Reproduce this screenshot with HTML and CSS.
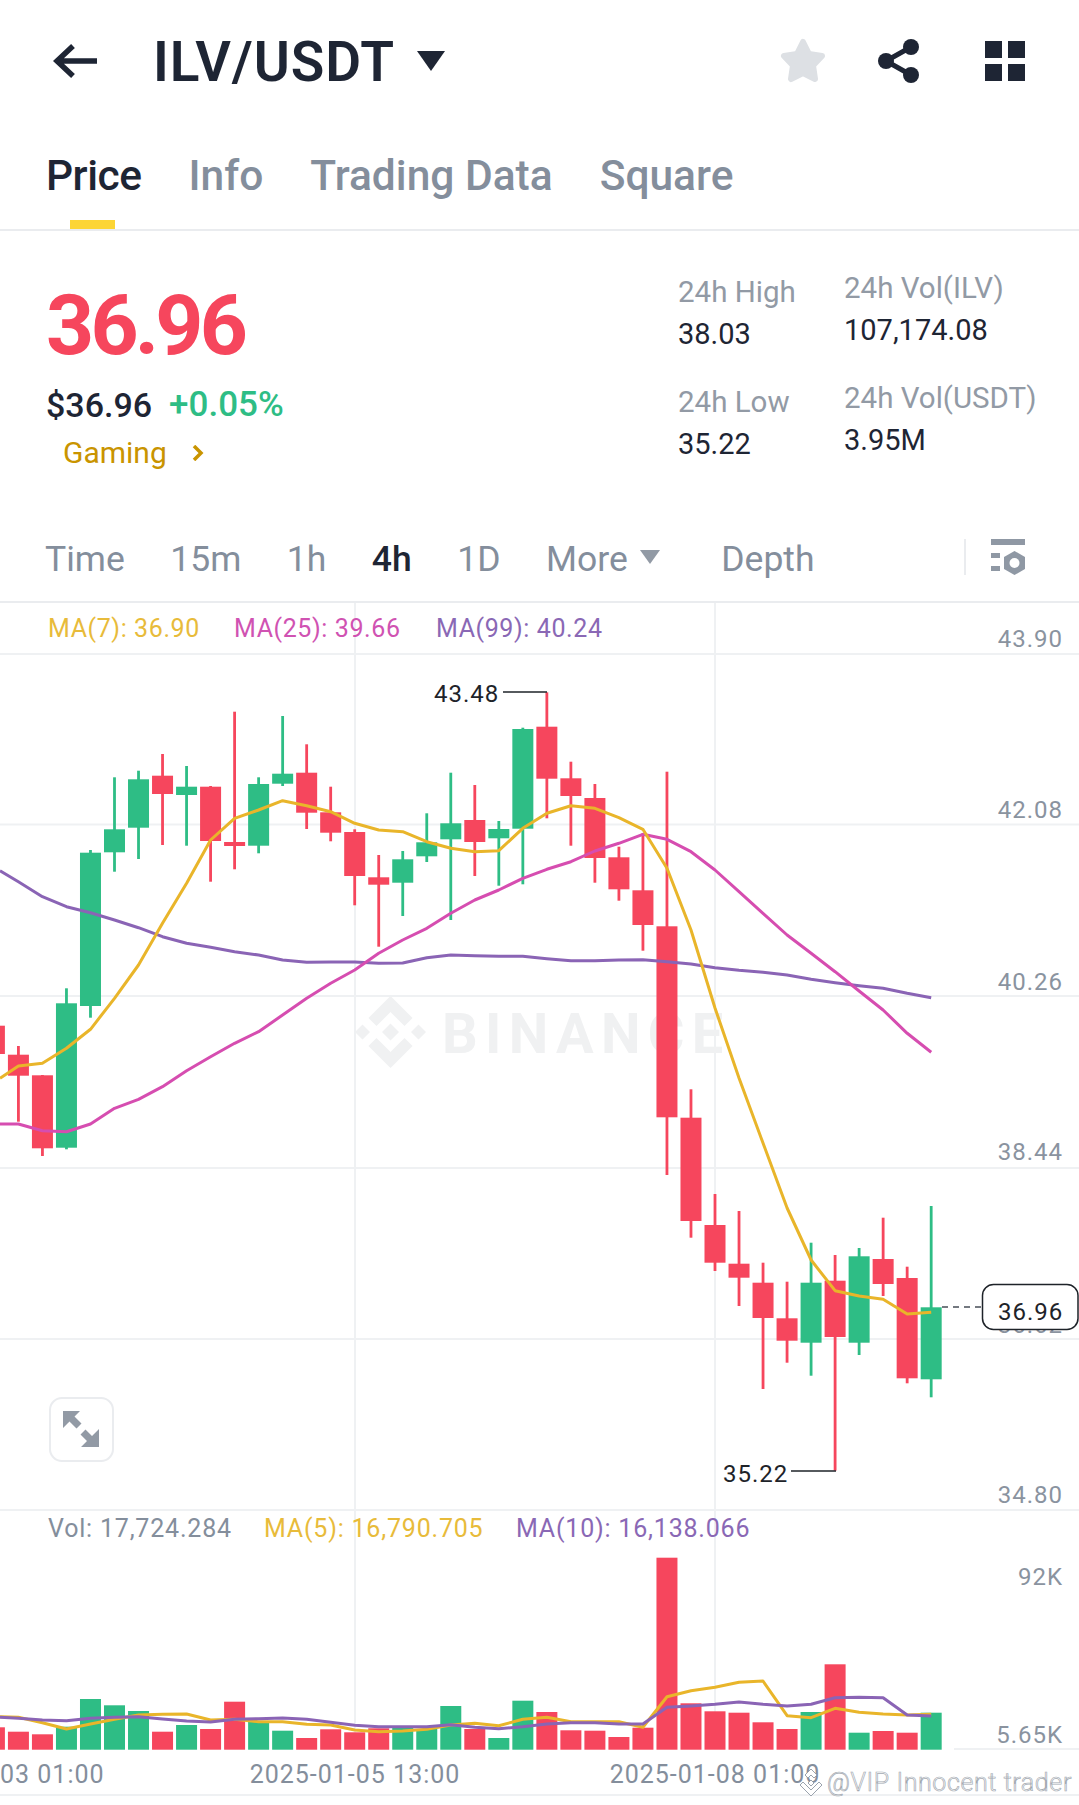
FILE: index.html
```html
<!DOCTYPE html>
<html>
<head>
<meta charset="UTF-8">
<title>ILV/USDT</title>
<link rel="stylesheet" href="styles.css">
</head>
<body>
<div class="wrapper">
	<div class="topbar">
		<svg class="back" width="45" height="36" viewBox="0 0 45 36"><path d="M44 18H5M20 3L4 18l16 15" fill="none" stroke="#1e2534" stroke-width="5.5"/></svg>
		<h1 class="pair">ILV/USDT</h1>
		<span class="caret"></span>
		<svg class="star" width="46" height="46" viewBox="0 0 46 46"><path d="M23 4l6 12 13 2-9 9.500 2 13.500-12-6-12 6 2-13.500L4 18l13-2z" fill="#dde0e4" stroke="#dde0e4" stroke-width="6" stroke-linejoin="round"/></svg>
		<svg class="share" width="44" height="46" viewBox="0 0 44 46"><path d="M33 9L8 23l25 14" fill="none" stroke="#1e2534" stroke-width="5"/><circle cx="33" cy="9" r="8" fill="#1e2534"/><circle cx="8" cy="23" r="8" fill="#1e2534"/><circle cx="33" cy="37" r="8" fill="#1e2534"/></svg>
		<div class="apps"><i></i><i></i><i></i><i></i></div>
	</div>

	<div class="tabs">
		<a class="tab active">Price</a>
		<a class="tab">Info</a>
		<a class="tab">Trading Data</a>
		<a class="tab">Square</a>
	</div>

	<div class="stats">
		<div class="summary">
			<div class="last">36.96</div>
			<div class="fiat"><span>$36.96</span><span class="change">+0.05%</span></div>
			<div class="tag">Gaming
				<svg width="12" height="16" viewBox="0 0 12 16"><path d="M2 1l7 7-7 7" fill="none" stroke="#c99400" stroke-width="3.500"/></svg>
			</div>
		</div>
		<div class="col col-left">
			<div class="label">24h High</div>
			<div class="value">38.03</div>
			<div class="label">24h Low</div>
			<div class="value">35.22</div>
		</div>
		<div class="col col-right">
			<div class="label">24h Vol(ILV)</div>
			<div class="value">107,174.08</div>
			<div class="label">24h Vol(USDT)</div>
			<div class="value">3.95M</div>
		</div>
	</div>

	<div class="intervals">
		<a class="iv iv-time">Time</a>
		<a class="iv">15m</a>
		<a class="iv">1h</a>
		<a class="iv on">4h</a>
		<a class="iv">1D</a>
		<a class="iv iv-more">More<span class="caret-sm"></span></a>
		<a class="iv">Depth</a>
		<div class="iv-tools">
			<svg width="36" height="36" viewBox="0 0 36 36"><path d="M1 0h34v6H1zM1 14h9v5H1zM1 27h9v5H1z" fill="#8f98a4"/><path d="M24.500 12l10.500 6v12l-10.500 6-10.500-6V18z" fill="#8f98a4"/><circle cx="24.500" cy="24" r="5" fill="#fff"/></svg>
		</div>
	</div>

	<svg id="chart" class="chart" width="1079" height="1202" viewBox="0 603 1079 1202">
		<g class="grid">
			<path d="M0 654H1079M0 824.500H1079M0 996H1079M0 1168H1079M0 1339H1079M0 1510H1079M0 1795H1079M954 1749H1079"/>
			<path d="M355 603V1749M715 603V1749"/>
		</g>
		<g class="mark">
			<path d="M390.500 996l22 22-8 8-14-14-14 14-8-8zM390.500 1068l22-22-8-8-14 14-14-14-8 8zM390.500 1023.500l8.500 8.500-8.500 8.500-8.500-8.500zM362.500 1024.500l7.500 7.500-7.500 7.500-7.500-7.500zM418.500 1024.500l7.500 7.500-7.500 7.500-7.500-7.500z"/>
			<text x="442" y="1053">BINANCE</text>
		</g>
		<g id="candles"></g>
		<g id="ma"></g>
		<g id="vols"></g>
		<g id="volma"></g>

		<text class="leg yellow" x="48" y="637">MA(7): 36.90</text>
		<text class="leg magenta" x="234" y="637">MA(25): 39.66</text>
		<text class="leg purple" x="436" y="637">MA(99): 40.24</text>

		<text class="axis" x="1063" y="647">43.90</text>
		<text class="axis" x="1063" y="818">42.08</text>
		<text class="axis" x="1063" y="990">40.26</text>
		<text class="axis" x="1063" y="1160">38.44</text>
		<text class="axis" x="1063" y="1333">36.62</text>
		<text class="axis" x="1063" y="1503">34.80</text>
		<text class="axis" x="1063" y="1585">92K</text>
		<text class="axis" x="1063" y="1743">5.65K</text>

		<text class="peak" x="434" y="702">43.48</text>
		<path class="thin" d="M503 692H547"/>
		<text class="peak" x="723" y="1482">35.22</text>
		<path class="thin" d="M791 1471H836"/>

		<path class="dash" d="M942 1307H983"/>
		<rect class="price-box" x="982.500" y="1284.500" width="95.500" height="45" rx="11"/>
		<text class="peak" x="998" y="1320">36.96</text>

		<rect class="expand" x="50" y="1398" width="63" height="63" rx="12"/>
		<path class="expand-icon" d="M63 1411h17l-5.500 5.500 7 7-5 5-7-7-6.500 6.500zM99 1447H81l6-6-6.500-6.500 5-5 6.500 6.500 7-7z"/>

		<text class="leg vol grey" x="48" y="1537">Vol: 17,724.284</text>
		<text class="leg vol yellow" x="264" y="1537">MA(5): 16,790.705</text>
		<text class="leg vol purple" x="516" y="1537">MA(10): 16,138.066</text>

		<text class="date date-cut" x="0" y="1783">03 01:00</text>
		<text class="date" x="355" y="1783">2025-01-05 13:00</text>
		<text class="date" x="715" y="1783">2025-01-08 01:00</text>

		<path class="wm-logo" d="M811 1769l6 6-3 3-3-3-3 3-3-3zM811 1796l11-11-3-3-8 8-8-8-3 3zM811 1780l3 3-3 3-3-3z"/>
		<text class="wm" x="827" y="1791">@VIP Innocent trader</text>
	</svg>
</div>
<script src="chart.js"></script>
</body>
</html>
```

FILE: styles.css
```css
body{
	margin:0;
	background:#FFF;
	color:#1e2534;
	font-family:Roboto,"Liberation Sans",sans-serif;
}
.wrapper{
	width:1079px;
	height:1805px;
	overflow:hidden;
}
.topbar{
	height:122px;
	display:flex;
	align-items:center;
	padding:0 54px 0 53px;
}
.pair{
	margin:3px 0 0 55px;
	font-size:55px;
	font-weight:600;
	line-height:1;
	letter-spacing:.9px;
}
.caret{
	margin:0 0 0 22px;
	border-top:20px solid #1e2534;
	border-left:14px solid transparent;
	border-right:14px solid transparent;
}
.star{
	margin-left:auto;
}
.share{
	margin-left:52px;
}
.apps{
	margin-left:63px;
	width:40px;
	height:40px;
	display:grid;
	grid-template-columns:1fr 1fr;
	grid-template-rows:1fr 1fr;
	gap:5.500px;
}
.apps i{
	background:#1e2534;
}
.tabs{
	height:107px;
	padding-left:46px;
	display:flex;
	gap:47px;
	border-bottom:2px solid #eaecef;
}
.tab{
	position:relative;
	margin-top:30px;
	font-size:42.500px;
	font-weight:500;
	line-height:47px;
	height:77px;
	color:#848e9c;
}
.tab.active{
	color:#1e2534;
	letter-spacing:-.500px;
}
.tab.active::after{
	content:"";
	position:absolute;
	left:24px;
	bottom:0;
	width:45px;
	height:9px;
	background:#fcd535;
}
.stats{
	height:290px;
	display:flex;
}
.summary{
	width:678px;
	padding:53px 0 0 46px;
	box-sizing:border-box;
}
.last{
	font-size:84px;
	line-height:84px;
	font-weight:700;
	color:#f6465d;
	letter-spacing:-3.800px;
}
.fiat{
	margin-top:17px;
	display:flex;
	gap:17px;
	font-size:34px;
	line-height:40px;
	font-weight:500;
}
.change{
	color:#2ebd85;
	font-size:35px;
}
.tag{
	margin:8px 0 0 17px;
	display:flex;
	align-items:center;
	gap:25px;
	font-size:30px;
	line-height:40px;
	color:#c99400;
}
.col{
	display:flex;
	flex-direction:column;
}
.col-left{
	width:166px;
	padding-top:41px;
}
.col-right{
	padding-top:37px;
}
.label{
	height:40px;
	line-height:40px;
	font-size:29.500px;
	color:#929aa5;
}
.value{
	height:40px;
	line-height:40px;
	margin-top:2px;
	margin-bottom:28px;
	font-size:29px;
	color:#1e2534;
}
.intervals{
	height:80px;
	display:flex;
	padding-left:45px;
	border-bottom:2px solid #eaecef;
}
.iv{
	margin-right:45.500px;
	font-size:35.500px;
	line-height:77px;
	color:#848e9c;
}
.iv.on{
	color:#1e2534;
	font-weight:500;
}
.iv-more{
	margin-right:61.500px;
	display:flex;
	align-items:flex-start;
}
.caret-sm{
	margin:29px 0 0 12px;
	border-top:14px solid #929aa5;
	border-left:10px solid transparent;
	border-right:10px solid transparent;
}
.iv-tools{
	position:relative;
	margin-left:auto;
	margin-right:53px;
	height:36px;
	margin-top:18px;
}
.iv-tools::before{
	content:"";
	position:absolute;
	left:-26px;
	top:0;
	height:36px;
	width:2px;
	background:#eaecef;
}
.chart{
	display:block;
	font-family:Roboto,"Liberation Sans",sans-serif;
}
.grid path{
	fill:none;
	stroke:#eff1f3;
	stroke-width:2;
}
.mark path{
	fill:#f0f1f2;
}
.mark text{
	font-size:56px;
	font-weight:700;
	letter-spacing:7.300px;
	fill:#f0f1f2;
}
.leg{
	font-size:25px;
	letter-spacing:.600px;
}
.leg.vol{
	letter-spacing:.800px;
}
.yellow{fill:#e8bb3a;}
.magenta{fill:#d052b2;}
.purple{fill:#8a68b5;}
.grey{fill:#848e9c;}
.axis{
	font-size:24px;
	letter-spacing:1px;
	text-anchor:end;
	fill:#8a939f;
}
.peak{
	font-size:24px;
	letter-spacing:1px;
	fill:#1e2329;
}
.thin{
	fill:none;
	stroke:#1e2329;
	stroke-width:1.500;
}
.dash{
	fill:none;
	stroke:#474d57;
	stroke-width:1.500;
	stroke-dasharray:6 5;
}
.price-box{
	fill:#FFF;
	stroke:#1e2329;
	stroke-width:1.500;
}
.expand{
	fill:#FFF;
	stroke:#eaecef;
	stroke-width:2;
}
.expand-icon{
	fill:#929aa5;
}
.date{
	font-size:25px;
	letter-spacing:1px;
	text-anchor:middle;
	fill:#848e9c;
}
.date-cut{
	text-anchor:start;
}
.wm{
	font-size:25px;
	font-weight:300;
	letter-spacing:.600px;
	fill:#FFF;
	stroke:#a4aab2;
	stroke-width:.7px;
}
.wm-logo{
	fill:#FFF;
	stroke:#8f98a4;
	stroke-width:.9px;
}
```

FILE: chart.js
```js
var RED = "#f6465d", GREEN = "#2ebd85";
var NS = "http://www.w3.org/2000/svg";

// colour, wick top, wick bottom, body top, body bottom, volume top
var candles = [
	["r",1025.7,1054,1025.7,1054,1727.3],
	["r",1046,1121.7,1054.7,1075.7,1731.7],
	["r",1075,1156,1075.3,1148.3,1734.3],
	["g",988.3,1149.3,1003.3,1147.7,1726.7],
	["g",850,1017.7,852.7,1006,1699],
	["g",777.3,871.7,829.3,852.3,1705.3],
	["g",770.7,859,779.3,827.7,1711],
	["r",754,845,775.7,794,1731.7],
	["g",766,845.7,786.7,795,1725],
	["r",786,881.7,786.7,841,1729],
	["r",711.7,869.3,842,846,1701.7],
	["g",777.3,853.3,784,845.7,1721.7],
	["g",716,786,773.7,783.7,1730.7],
	["r",744.3,829,772.7,812.7,1738],
	["r",786.7,841.3,812.3,832.7,1729.3],
	["r",829.3,905.3,832,876,1732.3],
	["r",855,946.7,877.3,884.7,1728.3],
	["g",851,916,859.3,882.7,1728],
	["g",813.3,862,842.3,856.3,1729],
	["g",772.7,920,823.3,839.3,1706],
	["r",785,876,820,842,1729],
	["g",821,885.7,829,838.3,1738],
	["g",727.7,884.3,729,828.7,1700.7],
	["r",692.3,818.3,726.7,778.7,1712],
	["r",761.7,845.7,778.3,796,1730.3],
	["r",784,882.7,798,858,1730.7],
	["r",846.7,900.7,857.3,889.3,1737],
	["r",833,950.7,890.3,925,1727.7],
	["r",771.7,1175,926.3,1117.3,1557.7],
	["r",1089.3,1237.7,1117.7,1221,1703.3],
	["r",1194,1271,1225,1262.7,1711.3],
	["r",1211,1306,1263.7,1277.7,1712.7],
	["r",1262.7,1389,1282.7,1318,1722.3],
	["r",1281.7,1362.7,1318.3,1340.7,1729],
	["g",1242.7,1375.7,1282.7,1342.7,1712],
	["r",1255,1470.7,1280.7,1337,1664.3],
	["g",1248,1355,1256.3,1342.7,1732.7],
	["r",1217.7,1296,1259,1284,1731],
	["r",1266.7,1383.3,1278,1378.3,1732.7],
	["g",1206,1397.3,1307.3,1379.3,1712.7]
];

// first value of each line is the one at the left edge
var ma7 = [1078.3,1066,1063.3,1048.3,1029.3,998.3,965,923.3,883.3,840,818.3,810,800.7,805.7,811.7,823.3,830,831.7,841.7,848.3,851.7,850.7,828.3,813.3,805.7,808.3,817.7,829.3,868.3,930,1008,1078,1143,1208,1260,1290.7,1296,1299.3,1314,1312.3];
var ma25 = [1124,1124,1130.7,1131.7,1124,1108.3,1099.3,1086.7,1070.7,1056.7,1043.3,1031.7,1015,998.3,983.3,970,953.3,940,928.3,913.3,900,890,878.3,869.3,861.7,851,843.3,834.3,839.3,851.7,870,891.7,913.3,935,953.3,971.7,991,1010,1033.3,1052.3];
var ma99 = [870.7,881.7,896.7,906.7,912.7,920,927.7,936.7,943.3,947.3,951.7,955,960,962.3,962,962,963.3,963,957.7,955,955.7,956.3,956.3,958.7,960.7,960.7,960,959.7,961.7,964,967.7,970.3,972.3,975,979.3,982.7,985.7,988.3,993.3,997.7];
var vol5 = [1716.7,1717.3,1722.7,1729,1724,1719.3,1715,1714.3,1714,1720,1719.3,1721.7,1721.7,1724.3,1725,1730,1731.7,1731,1729.3,1725,1723.3,1725.7,1719.3,1717.3,1721.7,1721.7,1721.7,1727.3,1696.7,1690.7,1687.3,1682.3,1681,1715.7,1717.7,1708.3,1712.3,1714,1715,1714.3];
var vol10 = [1717.3,1718.3,1720,1720.7,1718.3,1717.3,1716.7,1719,1721,1722,1719.3,1718.7,1718,1719.3,1722.3,1725.3,1726.7,1726.7,1726.7,1724.7,1727.3,1728.7,1726.7,1724,1722.7,1722.7,1724,1724,1707.3,1706,1704.3,1702,1704.3,1706,1704.3,1697.7,1697.3,1697.7,1715,1716];

function cx(i) {
	return -5.6 + 24.02 * i;
}

function add(parent, tag, attrs) {
	var node = document.createElementNS(NS, tag);
	for(var k in attrs) {
		node.setAttribute(k, attrs[k]);
	}
	parent.appendChild(node);
}

function drawLine(parent, values, color) {
	var pts = [];
	for(var i = 0; i < values.length; i++) {
		pts.push((i == 0 ? 0 : cx(i)).toFixed(1) + "," + values[i]);
	}
	add(parent, "polyline", {points: pts.join(" "), fill: "none", stroke: color, "stroke-width": 3, "stroke-linejoin": "round"});
}

var candleGroup = document.getElementById("candles");
var volGroup = document.getElementById("vols");
for(var i = 0; i < candles.length; i++) {
	var c = candles[i], x = cx(i), color = c[0] == "r" ? RED : GREEN;
	add(candleGroup, "rect", {x: x - 1.4, y: c[1], width: 2.8, height: c[2] - c[1], fill: color});
	add(candleGroup, "rect", {x: x - 10.5, y: c[3], width: 21, height: c[4] - c[3], fill: color});
	add(volGroup, "rect", {x: x - 10.5, y: c[5], width: 21, height: 1749.7 - c[5], fill: color});
}

var maGroup = document.getElementById("ma");
drawLine(maGroup, ma99, "#8a64b5");
drawLine(maGroup, ma25, "#d64db0");
drawLine(maGroup, ma7, "#e9b52a");

var volMa = document.getElementById("volma");
drawLine(volMa, vol5, "#e9b52a");
drawLine(volMa, vol10, "#8a64b5");
```
